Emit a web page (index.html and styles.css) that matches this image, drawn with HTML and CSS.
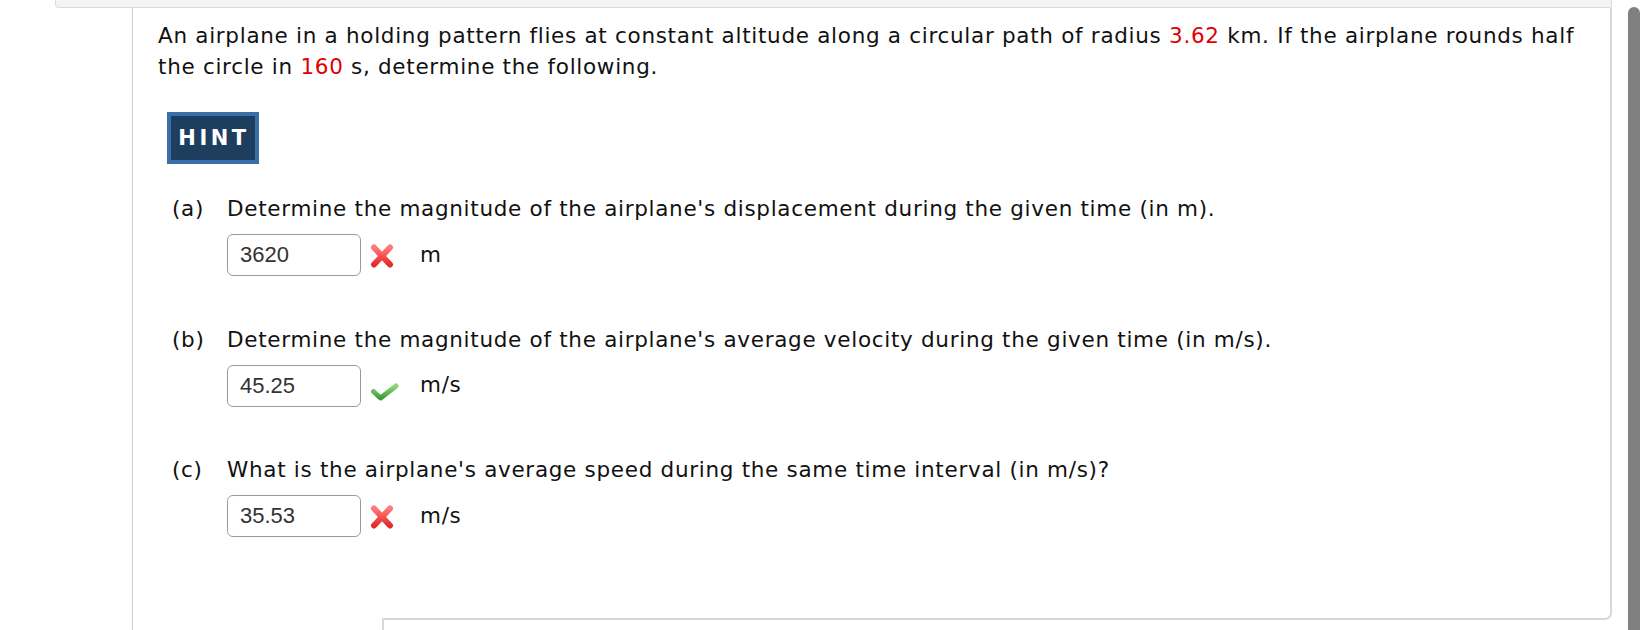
FILE: index.html
```html
<!DOCTYPE html>
<html>
<head>
<meta charset="utf-8">
<link rel="stylesheet" href="styles.css">
</head>
<body>
<div class="topbar"></div>
<div class="page">
  <div class="gutter"></div>
  <div class="main">
    <div class="card">
      <p class="question">An airplane in a holding pattern flies at constant altitude along a circular path of radius <span class="val">3.62</span> km. If the airplane rounds half the circle in <span class="val">160</span> s, determine the following.</p>
      <button class="hint">HINT</button>

      <div class="part">
        <div class="part-q"><span class="label">(a)</span><span class="text">Determine the magnitude of the airplane's displacement during the given time (in m).</span></div>
        <div class="answer">
          <div class="input">3620</div>
          <span class="icon">
            <svg width="24" height="26" viewBox="0 0 24 26"><defs><linearGradient id="gx1" x1="0" y1="0" x2="0" y2="1"><stop offset="0" stop-color="#ff7a7a"/><stop offset="1" stop-color="#e52b2b"/></linearGradient></defs><path d="M4 4.5 L20 21.5 M20 4.5 L4 21.5" stroke="url(#gx1)" stroke-width="6" stroke-linecap="round" fill="none"/></svg>
          </span>
          <span class="unit">m</span>
        </div>
      </div>

      <div class="part">
        <div class="part-q"><span class="label">(b)</span><span class="text">Determine the magnitude of the airplane's average velocity during the given time (in m/s).</span></div>
        <div class="answer">
          <div class="input">45.25</div>
          <span class="icon icon-check">
            <svg width="30" height="18" viewBox="0 0 30 18"><defs><linearGradient id="gc" x1="0" y1="0" x2="0" y2="1"><stop offset="0" stop-color="#8fd67c"/><stop offset="1" stop-color="#3f9b3a"/></linearGradient></defs><path d="M3.5 8.5 L10.5 15 L26 3" stroke="url(#gc)" stroke-width="5" stroke-linecap="round" stroke-linejoin="round" fill="none"/></svg>
          </span>
          <span class="unit">m/s</span>
        </div>
      </div>

      <div class="part">
        <div class="part-q"><span class="label">(c)</span><span class="text">What is the airplane's average speed during the same time interval (in m/s)?</span></div>
        <div class="answer">
          <div class="input">35.53</div>
          <span class="icon">
            <svg width="24" height="26" viewBox="0 0 24 26"><defs><linearGradient id="gx2" x1="0" y1="0" x2="0" y2="1"><stop offset="0" stop-color="#ff7a7a"/><stop offset="1" stop-color="#e52b2b"/></linearGradient></defs><path d="M4 4.5 L20 21.5 M20 4.5 L4 21.5" stroke="url(#gx2)" stroke-width="6" stroke-linecap="round" fill="none"/></svg>
          </span>
          <span class="unit">m/s</span>
        </div>
      </div>
    </div>
    <div class="below"></div>
  </div>
  <div class="scrollzone"><div class="scrollbar"></div></div>
</div>
</body>
</html>
```

FILE: styles.css
```css
html, body {
  margin: 0;
  padding: 0;
  background: #fff;
  height: 630px;
  overflow: hidden;
}
body {
  font-family: "DejaVu Sans", Verdana, sans-serif;
  color: #111;
}
.topbar {
  margin-left: 55px;
  width: 1555px;
  height: 7px;
  background: #f4f4f4;
  border: 1px solid #dcdcdc;
  border-top: none;
  border-bottom-left-radius: 4px;
  border-bottom-right-radius: 2px;
}
.page {
  display: flex;
  height: 622px;
}
.gutter {
  width: 132px;
  flex: none;
}
.main {
  width: 1479px;
  flex: none;
  border-left: 1px solid #cfcfcf;
  display: flex;
  flex-direction: column;
}
.card {
  position: relative;
  height: 598px;
  padding: 12px 0 0 25px;
  border-right: 2px solid #d8d8d8;
  border-bottom: 2px solid #d8d8d8;
  border-bottom-right-radius: 7px;
}
.card::after {
  content: "";
  position: absolute;
  left: 0;
  bottom: -2px;
  width: 249px;
  height: 2px;
  background: #fff;
}
.below {
  margin-left: 249px;
  flex: 1;
  border-left: 2px solid #d8d8d8;
}
.question {
  margin: 0;
  font-size: 21.5px;
  letter-spacing: 0.7px;
  line-height: 31px;
  width: 1440px;
}
.val {
  color: #e00000;
}
.hint {
  display: block;
  margin: 30px 0 0 9px;
  width: 92px;
  height: 52px;
  background: #1e3e5f;
  border: 4px solid #3a6fa8;
  color: #fff;
  font-family: "DejaVu Sans", Verdana, sans-serif;
  font-weight: bold;
  font-size: 21px;
  letter-spacing: 3.5px;
  padding: 0 0 0 2px;
  text-align: center;
}
.part {
  margin-top: 29px;
}
.part + .part {
  margin-top: 47.5px;
}
.part-q {
  display: flex;
  font-size: 21.5px;
  letter-spacing: 0.7px;
  line-height: 31px;
  padding-left: 14px;
}
.label {
  width: 55px;
  flex: none;
}
.answer {
  display: flex;
  align-items: center;
  margin: 10px 0 0 69px;
  height: 42px;
}
.input {
  box-sizing: border-box;
  width: 134px;
  height: 42px;
  border: 1.5px solid #9a9a9a;
  border-radius: 6px;
  font-family: "Liberation Sans", Arial, sans-serif;
  font-size: 22px;
  color: #333;
  padding-left: 12px;
  line-height: 39px;
}
.icon {
  display: flex;
  width: 30px;
  margin-left: 9px;
  padding-top: 2px;
}
.icon-check {
  padding-top: 12px;
}
.unit {
  margin-left: 20px;
  font-size: 21.5px;
  letter-spacing: 0.7px;
  padding-bottom: 2px;
}
.scrollzone {
  flex: 1;
  display: flex;
  justify-content: flex-end;
}
.scrollbar {
  width: 12px;
  background: #808080;
  border-top-left-radius: 6px;
  border-top-right-radius: 6px;
  margin-top: -1px;
  height: 623px;
}
```
